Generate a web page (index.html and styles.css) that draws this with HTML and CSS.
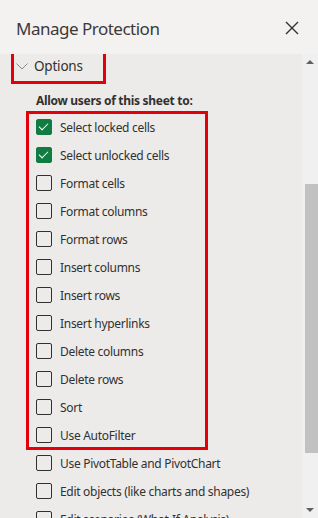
FILE: index.html
```html
<!DOCTYPE html>
<html lang="en">
<head>
  <meta charset="UTF-8">
  <title>Manage Protection</title>
  <link rel="stylesheet" href="styles.css">
</head>
<body>
<div id="pane">
  <div class="header">
    <div class="title">Manage Protection</div>
    <svg class="close" width="14" height="14" viewBox="0 0 14 14">
      <path d="M1 1L13 13M13 1L1 13" stroke="#323130" stroke-width="1.4" fill="none"/>
    </svg>
  </div>
  <div class="body">
    <div class="content">
      <div class="section marked">
        <svg class="chevron" width="12" height="7" viewBox="0 0 12 7">
          <path d="M0.5 0.5L6 6L11.5 0.5" stroke="#8a8886" stroke-width="1" fill="none"/>
        </svg>
        <span>Options</span>
      </div>
      <div class="label">Allow users of this sheet to:</div>
      <div class="group marked">
        <div class="row"><span class="box checked"></span>Select locked cells</div>
        <div class="row"><span class="box checked"></span>Select unlocked cells</div>
        <div class="row"><span class="box"></span>Format cells</div>
        <div class="row"><span class="box"></span>Format columns</div>
        <div class="row"><span class="box"></span>Format rows</div>
        <div class="row"><span class="box"></span>Insert columns</div>
        <div class="row"><span class="box"></span>Insert rows</div>
        <div class="row"><span class="box"></span>Insert hyperlinks</div>
        <div class="row"><span class="box"></span>Delete columns</div>
        <div class="row"><span class="box"></span>Delete rows</div>
        <div class="row"><span class="box"></span>Sort</div>
        <div class="row"><span class="box"></span>Use AutoFilter</div>
      </div>
      <div class="row"><span class="box"></span>Use PivotTable and PivotChart</div>
      <div class="row"><span class="box"></span>Edit objects (like charts and shapes)</div>
      <div class="row"><span class="box"></span>Edit scenarios (What-If Analysis)</div>
    </div>
    <div class="scrollbar">
      <div class="arrow up"></div>
      <div class="track"><div class="thumb"></div></div>
      <div class="arrow down"></div>
    </div>
  </div>
</div>
</body>
</html>
```

FILE: styles.css
```css
html, body {
    width: 100%;
    height: 100%;
    margin: 0;
    padding: 0;
    overflow: hidden;
    font-family: "Noto Sans", "Open Sans", sans-serif;
    color: #323130;
    background: #f3f2f1;
}

#pane {
    width: 318px;
    height: 518px;
    display: flex;
    flex-direction: column;
}

.header {
    height: 54px;
    flex: none;
    padding: 0 19px 0 16px;

    display: flex;
    align-items: center;
    justify-content: space-between;
}

.title {
    font-size: 17px;
    letter-spacing: -0.5px;
    color: #3b3a39;
    margin-top: 2px;
}

.close {
    margin-top: 2px;
}

.body {
    flex: 1;
    min-height: 0;
    display: flex;
}

.content {
    flex: 1;
    background: #edebe9;
    overflow: hidden;
}

.marked {
    position: relative;
}

.marked::after {
    content: "";
    position: absolute;
    top: -6px;
    bottom: -6px;
    left: -3px;
    right: -3px;
    border: 3px solid #e3000b;
    pointer-events: none;
}

.section {
    width: 89px;
    height: 24px;
    margin-left: 14px;

    display: flex;
    align-items: center;
    font-size: 13.5px;
    letter-spacing: -0.2px;
}

.chevron {
    margin: 0 6px 0 2px;
}

.label {
    margin-top: 13px;
    padding-left: 36px;
    height: 20px;
    line-height: 20px;
    font-size: 12px;
    letter-spacing: -0.3px;
    font-weight: bold;
}

.group {
    margin: 2px 97px 0 29px;
}

.group.marked::after {
    top: -2px;
    bottom: -1px;
}

.group .row {
    padding-left: 7px;
}

.row {
    height: 28px;
    padding-left: 36px;

    display: flex;
    align-items: center;
    font-size: 12px;
    letter-spacing: -0.3px;
    white-space: nowrap;
}

.box {
    width: 14px;
    height: 14px;
    margin-right: 8px;
    border: 1px solid #323130;
    border-radius: 2px;
    flex: none;
    position: relative;
}

.box.checked {
    background: #107c41;
    border-color: #107c41;
}

.box.checked::after {
    content: "";
    position: absolute;
    left: 4px;
    top: 1px;
    width: 4px;
    height: 8px;
    border: solid #fff;
    border-width: 0 1.5px 1.5px 0;
    transform: rotate(45deg);
}

.scrollbar {
    width: 16px;
    flex: none;
    background: #f0f0f0;
    display: flex;
    flex-direction: column;
}

.arrow {
    height: 16px;
    flex: none;
    display: flex;
    align-items: center;
    justify-content: center;
}

.arrow::before {
    content: "";
    border-left: 4px solid transparent;
    border-right: 4px solid transparent;
}

.arrow.up::before {
    border-bottom: 4px solid #606060;
}

.arrow.down::before {
    border-top: 4px solid #606060;
}

.track {
    flex: 1;
    padding-top: 114px;
    padding-left: 3px;
}

.thumb {
    height: 269px;
    background: #c1c1c1;
}
```
